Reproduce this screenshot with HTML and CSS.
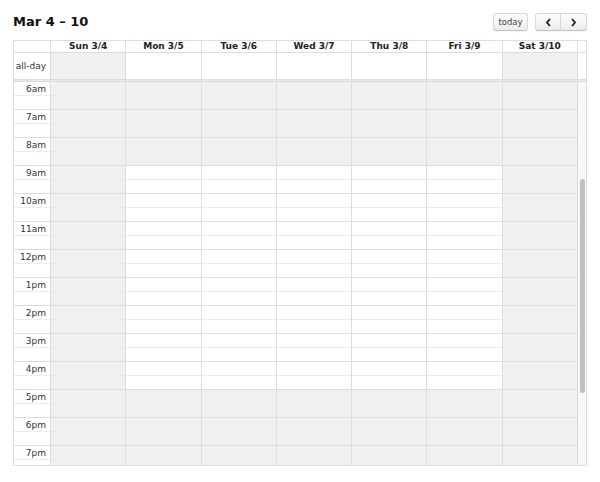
FILE: index.html
```html
<!DOCTYPE html>
<html lang="en">
<head>
<meta charset="utf-8">
<title>Calendar</title>
<link rel="stylesheet" href="styles.css">
</head>
<body>
<div class="cal">
  <div class="toolbar">
    <h2 class="title">Mar 4 – 10</h2>
    <div class="actions">
      <button class="btn today" type="button">today</button>
      <div class="group">
        <button class="btn prev" type="button" aria-label="prev">
          <svg width="7" height="9" viewBox="0 0 7 9"><path d="M5 1 L2 4.5 L5 8" fill="none" stroke="#222" stroke-width="1.9"/></svg>
        </button>
        <button class="btn next" type="button" aria-label="next">
          <svg width="7" height="9" viewBox="0 0 7 9"><path d="M2 1 L5 4.5 L2 8" fill="none" stroke="#222" stroke-width="1.9"/></svg>
        </button>
      </div>
    </div>
  </div>
  <div class="view">
    <div class="row head">
      <div class="cell"></div>
      <div class="cell">Sun 3/4</div>
      <div class="cell">Mon 3/5</div>
      <div class="cell">Tue 3/6</div>
      <div class="cell">Wed 3/7</div>
      <div class="cell">Thu 3/8</div>
      <div class="cell">Fri 3/9</div>
      <div class="cell">Sat 3/10</div>
      <div class="cell gut"></div>
    </div>
    <div class="row allday">
      <div class="cell axis">all-day</div>
      <div class="cell nb"></div>
      <div class="cell"></div>
      <div class="cell"></div>
      <div class="cell"></div>
      <div class="cell"></div>
      <div class="cell"></div>
      <div class="cell nb"></div>
      <div class="cell gut"></div>
    </div>
    <div class="divider"></div>
    <div class="row body">
      <div class="col axis-col">
        <div class="hour">6am</div>
        <div class="hour">7am</div>
        <div class="hour">8am</div>
        <div class="hour">9am</div>
        <div class="hour">10am</div>
        <div class="hour">11am</div>
        <div class="hour">12pm</div>
        <div class="hour">1pm</div>
        <div class="hour">2pm</div>
        <div class="hour">3pm</div>
        <div class="hour">4pm</div>
        <div class="hour">5pm</div>
        <div class="hour">6pm</div>
        <div class="hour">7pm</div>
        <div class="hour"></div>
      </div>
      <div class="col"><div class="blk nb rest"></div></div>
      <div class="col"><div class="blk nb pre"></div><div class="blk biz"></div><div class="blk nb rest"></div></div>
      <div class="col"><div class="blk nb pre"></div><div class="blk biz"></div><div class="blk nb rest"></div></div>
      <div class="col"><div class="blk nb pre"></div><div class="blk biz"></div><div class="blk nb rest"></div></div>
      <div class="col"><div class="blk nb pre"></div><div class="blk biz"></div><div class="blk nb rest"></div></div>
      <div class="col"><div class="blk nb pre"></div><div class="blk biz"></div><div class="blk nb rest"></div></div>
      <div class="col"><div class="blk nb rest"></div></div>
      <div class="track"><div class="thumb"></div></div>
    </div>
  </div>
</div>
</body>
</html>
```

FILE: styles.css
```css
html, body {
  background: #fff;
}

body {
  margin: 0;
  padding: 13px 13px 0;
  font-family: "DejaVu Sans", "Liberation Sans", sans-serif;
  color: #222;
}

.cal {
  width: 574px;
}

.toolbar {
  display: flex;
  justify-content: space-between;
  align-items: center;
  height: 18px;
  margin-bottom: 9px;
}

.title {
  margin: 0;
  font-size: 13px;
  font-weight: bold;
  line-height: 18px;
  color: #111;
}

.actions {
  display: flex;
  gap: 7px;
}

.group {
  display: flex;
}

.btn {
  box-sizing: border-box;
  height: 18px;
  margin: 0;
  padding: 0;
  display: flex;
  align-items: center;
  justify-content: center;
  border: 1px solid #d9d9d9;
  border-bottom-color: #c2c2c2;
  border-radius: 3px;
  background: linear-gradient(#fdfdfd, #ececec);
  box-shadow: 0 1px 1px rgba(0, 0, 0, 0.04);
  font-family: "DejaVu Sans", sans-serif;
  font-size: 8.5px;
  color: #444;
}

.today {
  width: 35px;
}

.prev,
.next {
  width: 26px;
}

.prev {
  border-top-right-radius: 0;
  border-bottom-right-radius: 0;
}

.next {
  border-left: 0;
  border-top-left-radius: 0;
  border-bottom-left-radius: 0;
}

.view {
  box-sizing: border-box;
  width: 574px;
  border: 1px solid #ddd;
}

.row {
  display: grid;
  grid-template-columns: 37px repeat(7, 1fr) 8px;
}

.cell {
  border-right: 1px solid #ddd;
}

.cell.gut {
  border-right: 0;
}

.head {
  height: 11px;
  border-bottom: 1px solid #ddd;
}

.head .cell {
  font-size: 9px;
  font-weight: bold;
  line-height: 11px;
  text-align: center;
  color: #222;
  white-space: nowrap;
}

.allday {
  height: 26px;
}

.axis {
  font-size: 9px;
  line-height: 26px;
  text-align: right;
  padding-right: 4px;
  color: #333;
}

.nb {
  background-color: #f0f0f0;
}

.divider {
  height: 1px;
  background: #e8e8e8;
  border-top: 1px solid #ddd;
  border-bottom: 1px solid #ddd;
}

.body {
  height: 383px;
  overflow: hidden;
}

.col {
  display: flex;
  flex-direction: column;
  border-right: 1px solid #ddd;
  min-height: 0;
}

.blk,
.hour {
  background-image: repeating-linear-gradient(
    to bottom,
    transparent 0,
    transparent 13px,
    #ececec 13px,
    #ececec 14px,
    transparent 14px,
    transparent 27px,
    #ddd 27px,
    #ddd 28px
  );
}

.blk {
  flex: none;
}

.pre {
  height: 84px;
}

.biz {
  height: 224px;
}

.rest {
  flex: 1;
}

.hour {
  flex: none;
  height: 28px;
  box-sizing: border-box;
  padding-right: 4px;
  font-size: 9px;
  line-height: 14px;
  text-align: right;
  color: #333;
}

.track {
  background: #f8f8f8;
}

.thumb {
  width: 5px;
  height: 214px;
  margin: 97px 0 0 2px;
  border-radius: 3px;
  background: #c1c1c1;
}
```
